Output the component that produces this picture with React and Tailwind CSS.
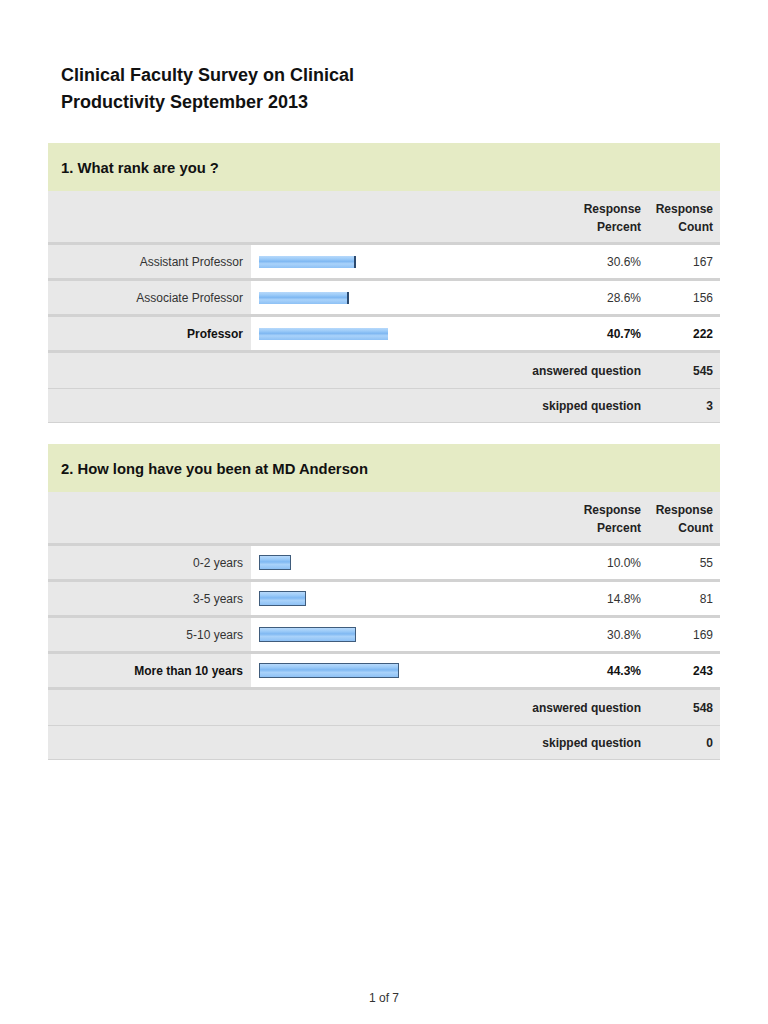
const questions = [
  {
    title: "1. What rank are you ?",
    framed: false,
    rows: [
      { label: "Assistant Professor", pct: 30.6, count: 167, edge: true },
      { label: "Associate Professor", pct: 28.6, count: 156, edge: true },
      { label: "Professor", pct: 40.7, count: 222, bold: true },
    ],
    answered: 545,
    skipped: 3,
  },
  {
    title: "2. How long have you been at MD Anderson",
    framed: true,
    rows: [
      { label: "0-2 years", pct: 10.0, count: 55 },
      { label: "3-5 years", pct: 14.8, count: 81 },
      { label: "5-10 years", pct: 30.8, count: 169 },
      { label: "More than 10 years", pct: 44.3, count: 243, bold: true },
    ],
    answered: 548,
    skipped: 0,
  },
];

const barFill =
  "bg-[linear-gradient(to_bottom,#b7d9fb_0%,#9ccbf8_25%,#7fb8f2_45%,#a9d2fa_65%,#8ec1f5_100%)]";

function Bar({ pct, framed, edge }) {
  const width = Math.round(pct * 3.16);
  if (framed) {
    return (
      <div
        className={`h-[15px] border border-[#3f5c7c] ${barFill}`}
        style={{ width }}
      />
    );
  }
  return (
    <div
      className={`h-[12px] ${barFill} ${edge ? "border-r-2 border-[#2c4a6e]" : ""}`}
      style={{ width }}
    />
  );
}

function Question({ q }) {
  return (
    <section className="w-[672px] text-[#222]">
      <div className="flex h-[48px] items-center bg-[#e5ebc5] px-[13px] pt-[2px] text-[14.8px] font-bold text-[#111]">
        {q.title}
      </div>

      <div className="grid h-[54px] grid-cols-[203px_297px_100px_72px] border-b-[3px] border-[#d2d2d2] bg-[#e8e8e8] pt-[3px] text-[12px] font-bold leading-[18px] text-[#222]">
        <div />
        <div />
        <div className="flex flex-col items-end justify-center pr-[7px]">
          <span>Response</span>
          <span>Percent</span>
        </div>
        <div className="flex flex-col items-end justify-center pr-[7px]">
          <span>Response</span>
          <span>Count</span>
        </div>
      </div>

      {q.rows.map((row) => (
        <div
          key={row.label}
          className={`grid h-[36px] grid-cols-[203px_297px_100px_72px] border-b-[3px] border-[#d2d2d2] text-[12px] ${
            row.bold ? "font-bold text-[#111]" : "text-[#333]"
          }`}
        >
          <div className="flex items-center justify-end bg-[#e8e8e8] pr-2">
            {row.label}
          </div>
          <div className="flex items-center bg-white pl-2">
            <Bar pct={row.pct} framed={q.framed} edge={row.edge} />
          </div>
          <div className="flex items-center justify-end bg-white pr-[7px]">
            {row.pct.toFixed(1)}%
          </div>
          <div className="flex items-center justify-end bg-white pr-[7px]">
            {row.count}
          </div>
        </div>
      ))}

      <div className="flex h-[36px] items-center justify-end border-b border-[#d2d2d2] bg-[#e8e8e8] text-[12px] font-bold text-[#222]">
        <span className="pr-[7px]">answered question</span>
        <span className="w-[72px] pr-[7px] text-right">{q.answered}</span>
      </div>
      <div className="flex h-[34px] items-center justify-end border-b border-[#d2d2d2] bg-[#e8e8e8] text-[12px] font-bold text-[#222]">
        <span className="pr-[7px]">skipped question</span>
        <span className="w-[72px] pr-[7px] text-right">{q.skipped}</span>
      </div>
    </section>
  );
}

export default function App() {
  return (
    <div
      className="relative flex h-[1024px] w-[768px] flex-col bg-white pl-[48px] pt-[62px]"
      style={{ fontFamily: '"Liberation Sans", Arial, sans-serif' }}
    >
      <h1 className="mb-[27px] pl-[13px] text-[18px] font-bold leading-[27px] text-[#111]">
        Clinical Faculty Survey on Clinical
        <br />
        Productivity September 2013
      </h1>

      <div className="flex flex-col gap-[21px]">
        {questions.map((q) => (
          <Question key={q.title} q={q} />
        ))}
      </div>

      <div className="mt-auto mb-[17px] -ml-[48px] text-center text-[12px] text-[#333]">
        1 of 7
      </div>
    </div>
  );
}
